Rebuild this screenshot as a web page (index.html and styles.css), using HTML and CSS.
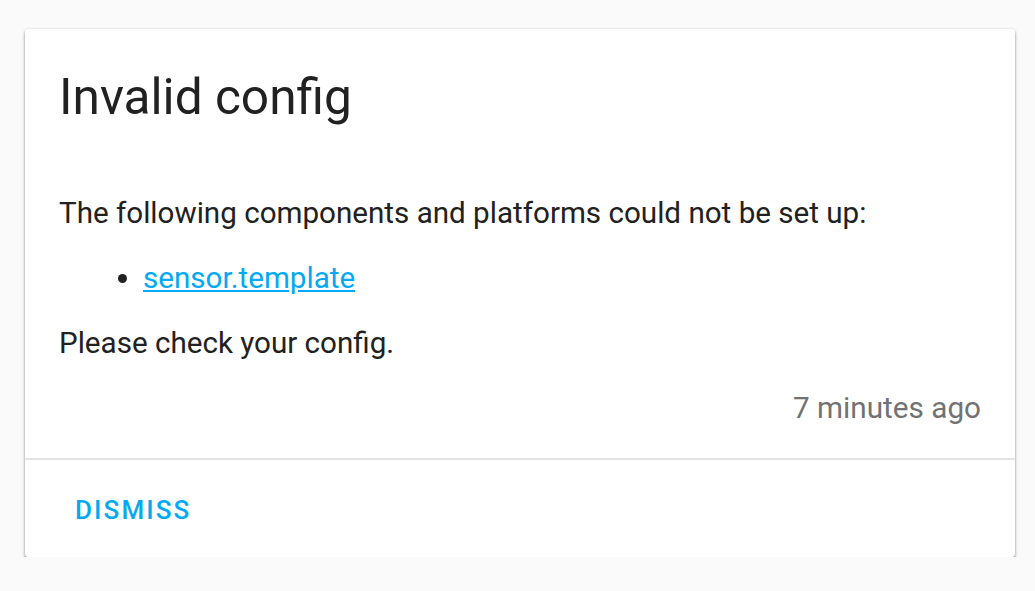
FILE: index.html
```html
<!DOCTYPE html>
<html>
<head>
<meta charset="utf-8">
<link rel="stylesheet" href="styles.css">
</head>
<body>
<div class="card">
  <div class="content">
    <h1 class="title">Invalid config</h1>
    <div class="message">
      <p>The following components and platforms could not be set up:</p>
      <ul>
        <li><a href="#">sensor.template</a></li>
      </ul>
      <p>Please check your config.</p>
    </div>
    <div class="time">7 minutes ago</div>
  </div>
  <div class="actions">
    <button class="btn">Dismiss</button>
  </div>
</div>
</body>
</html>
```
FILE: styles.css
```css
html, body {
  margin: 0;
  padding: 0;
  background: #fafafa;
  font-family: Roboto, "Noto Sans", sans-serif;
}
body {
  padding: 29px 20px 0 25px;
}
.card {
  width: 990px;
  height: 528px;
  background: #fff;
  border-radius: 3px;
  box-shadow: 0 0 3px 0 rgba(0,0,0,0.15), 0 2px 2px 0 rgba(0,0,0,0.3), 0 3px 4px 0 rgba(0,0,0,0.15);
  display: flex;
  flex-direction: column;
  box-sizing: border-box;
}
.content {
  padding: 0 34px;
  height: 431px;
  box-sizing: border-box;
  border-bottom: 2px solid #e4e4e4;
}
.title {
  margin: 0;
  padding-top: 36px;
  font-size: 49.6px;
  font-weight: 400;
  line-height: 64px;
  color: #212121;
}
.message {
  color: #212121;
  font-size: 29.6px;
  line-height: 40px;
  margin-top: 64px;
}
.message p { margin: 0; }
.message ul {
  margin: 25px 0 25px 0;
  padding-left: 84px;
}
.message a { color: #03a9f4; }
.time {
  text-align: right;
  color: #727272;
  font-size: 29.7px;
  line-height: 40px;
  margin-top: 25px;
}
.actions {
  padding: 30px 34px 0;
}
.btn {
  background: none;
  border: 0;
  padding: 0 8px;
  font-family: Roboto, sans-serif;
  font-size: 26px;
  font-weight: 500;
  letter-spacing: 2.1px;
  text-transform: uppercase;
  color: #03a9f4;
  line-height: 40px;
  margin-left: 8px;
}
```
